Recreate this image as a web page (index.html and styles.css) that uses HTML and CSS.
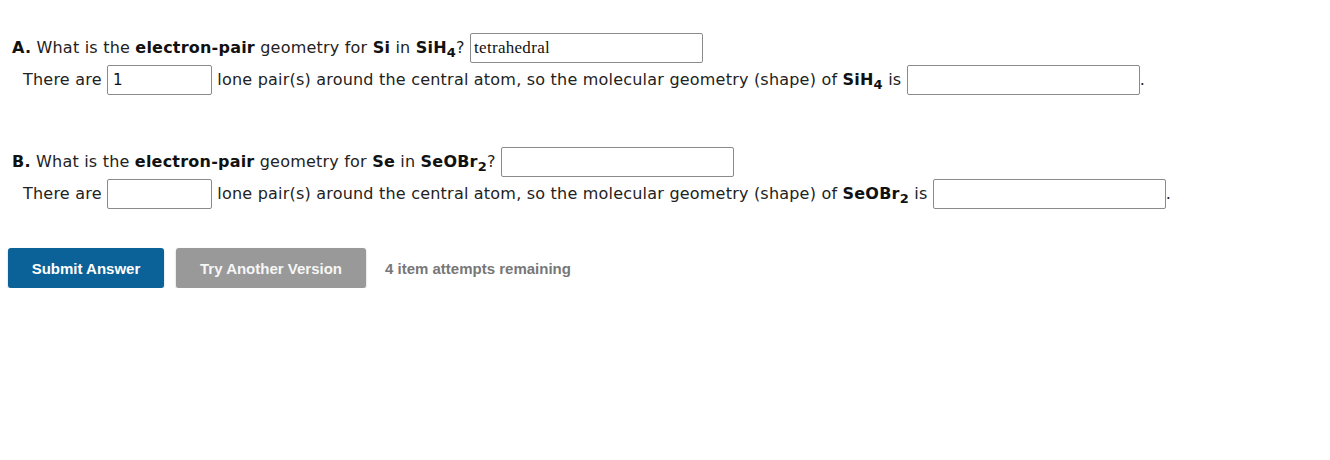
FILE: index.html
```html
<!DOCTYPE html>
<html>
<head>
<meta charset="utf-8">
<link rel="stylesheet" href="styles.css">
</head>
<body>
<div class="page">
  <div class="question">
    <div class="line q-line"><b>A.</b> What is the <b>electron-pair</b> geometry for <b>Si</b> in <b>SiH<sub>4</sub></b>? <span class="field serif">tetrahedral</span></div>
    <div class="line sub-line">There are <span class="field small">1</span> lone pair(s) around the central atom, so the molecular geometry (shape) of <b>SiH<sub>4</sub></b> is <span class="field"></span>.</div>
  </div>
  <div class="question second">
    <div class="line q-line"><b>B.</b> What is the <b>electron-pair</b> geometry for <b>Se</b> in <b>SeOBr<sub>2</sub></b>? <span class="field"></span></div>
    <div class="line sub-line">There are <span class="field small"></span> lone pair(s) around the central atom, so the molecular geometry (shape) of <b>SeOBr<sub>2</sub></b> is <span class="field"></span>.</div>
  </div>
  <div class="actions">
    <button class="btn btn-primary">Submit Answer</button>
    <button class="btn btn-secondary">Try Another Version</button>
    <span class="attempts">4 item attempts remaining</span>
  </div>
</div>
</body>
</html>
```
FILE: styles.css
```css
html, body {
  margin: 0;
  padding: 0;
  background: #fff;
}
.page {
  padding: 32px 0 0 12px;
  font-family: "DejaVu Sans", Verdana, sans-serif;
  font-size: 16px;
  letter-spacing: 0.21px;
  color: #222;
}
.question {
  display: flex;
  flex-direction: column;
}
.second {
  margin-top: 50px;
}
.line {
  height: 32px;
  line-height: 32px;
  white-space: nowrap;
}
.sub-line {
  padding-left: 11px;
}
b {
  font-weight: bold;
  color: #111;
}
sub {
  font-size: 13px;
  vertical-align: -4px;
  line-height: 0;
}
.field {
  display: inline-block;
  box-sizing: border-box;
  width: 233px;
  height: 30px;
  border: 1px solid #8a8a8a;
  border-radius: 2px;
  vertical-align: middle;
  line-height: 28px;
  padding: 0 5px;
  font-size: 15px;
  letter-spacing: 0;
  color: #111;
  position: relative;
  top: -1px;
}
.field.serif {
  font-family: "Liberation Serif", "Times New Roman", serif;
  font-size: 17px;
  letter-spacing: 0.3px;
  padding: 0 3px;
}
.field.small {
  width: 105px;
}
.actions {
  display: flex;
  align-items: center;
  margin-top: 38px;
  margin-left: -4px;
  gap: 12px;
}
.btn {
  height: 40px;
  border: none;
  border-radius: 3px;
  font-family: "Liberation Sans", Arial, sans-serif;
  font-weight: bold;
  font-size: 15px;
  letter-spacing: 0;
  color: #fff;
  box-shadow: 0 1px 2px rgba(0,0,0,0.25);
}
.btn-primary {
  width: 156px;
  background: #0b6299;
}
.btn-secondary {
  width: 190px;
  background: #999;
  color: #f6f6f6;
}
.attempts {
  margin-left: 7px;
  font-family: "Liberation Sans", Arial, sans-serif;
  font-weight: bold;
  font-size: 15px;
  letter-spacing: 0;
  color: #777;
}
```
